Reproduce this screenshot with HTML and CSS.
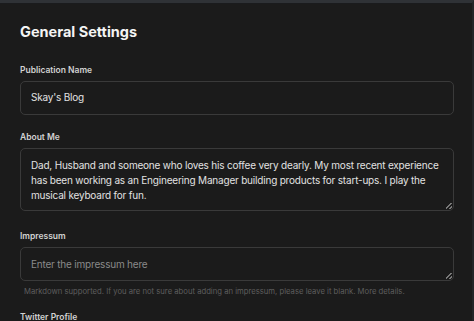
FILE: index.html
```html
<!DOCTYPE html>
<html>
<head>
<meta charset="utf-8">
<link rel="stylesheet" href="styles.css">
</head>
<body>
<div class="frame">
  <main class="panel">
    <h1 class="title">General Settings</h1>
    <div class="field">
      <label class="label">Publication Name</label>
      <div class="input">Skay's Blog</div>
    </div>
    <div class="field field-ta">
      <label class="label">About Me</label>
      <div class="input textarea">Dad, Husband and someone who loves his coffee very dearly. My most recent experience has been working as an Engineering Manager building products for start-ups. I play the musical keyboard for fun.<span class="grip"></span></div>
    </div>
    <div class="field field-help">
      <label class="label">Impressum</label>
      <div class="input short placeholder">Enter the impressum here<span class="grip"></span></div>
      <p class="help">Markdown supported. If you are not sure about adding an impressum, please leave it blank. More details.</p>
    </div>
    <div class="field">
      <label class="label">Twitter Profile</label>
    </div>
  </main>
</div>
</body>
</html>
```
FILE: styles.css
```css
html, body {
  margin: 0;
  padding: 0;
  background: #1b1b1b;
  height: 100%;
  overflow: hidden;
}
body {
  font-family: Inter, "Noto Sans", sans-serif;
  color: #e2e2e2;
}
.frame {
  box-sizing: border-box;
  min-height: 100%;
  border-top: 3px solid #2f3236;
  border-right: 2px solid #232528;
  box-shadow: inset 0 1px 0 #1a1b1d;
}
.panel {
  padding: 20px 18px 0 20px;
}
.title {
  margin: 0 0 23px 0;
  font-size: 14.5px;
  font-weight: 700;
  color: #f4f4f4;
  line-height: 18px;
}
.field {
  margin-bottom: 16px;
}
.field-ta {
  margin-bottom: 19px;
}
.field-help {
  margin-bottom: 14px;
}
.label {
  display: block;
  font-size: 8.5px;
  font-weight: 600;
  color: #d2d2d2;
  line-height: 12px;
  margin-bottom: 5px;
}
.input {
  box-sizing: border-box;
  border: 1px solid #3a3a3a;
  border-radius: 5px;
  padding: 8px 8px 9px 10px;
  font-family: Inter, "Noto Sans", sans-serif;
  font-size: 10px;
  letter-spacing: -0.2px;
  line-height: 15px;
  color: #e2e2e2;
  position: relative;
}
.textarea {
  padding: 9px 8px 7px 10px;
}
.short {
  padding: 9px 8px 8px 10px;
}
.placeholder {
  color: #8a8a8a;
}
.grip {
  position: absolute;
  right: 1px;
  bottom: 1px;
  width: 6px;
  height: 6px;
  background: linear-gradient(135deg, transparent 40%, #7a7a7a 40%, #7a7a7a 52%, transparent 52%, transparent 72%, #7a7a7a 72%, #7a7a7a 84%, transparent 84%);
}
.help {
  margin: 6px 0 0 0;
  padding-left: 4px;
  font-size: 7.7px;
  color: #5e5e5e;
  line-height: 10px;
}
```
